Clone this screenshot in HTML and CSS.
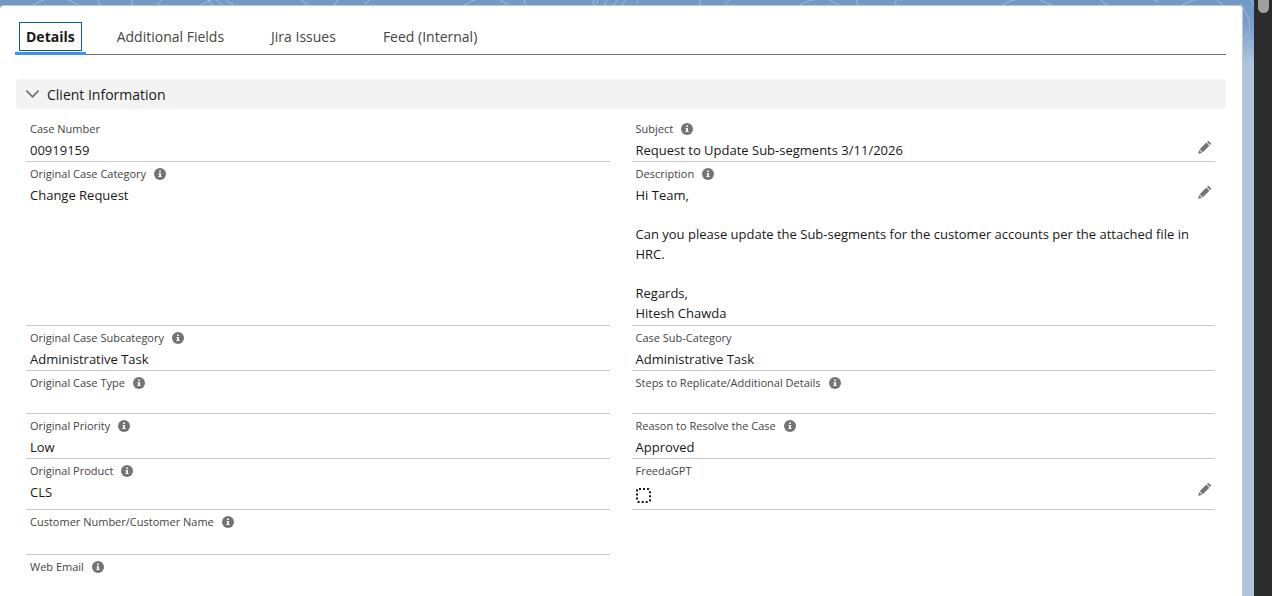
FILE: index.html
```
<!DOCTYPE html>
<html lang="en">
<head>
    <meta charset="UTF-8">
    <meta name="viewport" content="width=device-width, initial-scale=1.0">
    <title>Case 00919159 - Details</title>
    <link rel="stylesheet" href="styles.css">
</head>
<body>
    <!-- Shared icons -->
    <svg class="sprite" aria-hidden="true">
        <symbol id="icon-info" viewBox="0 0 12 12">
            <circle cx="6" cy="6" r="6" fill="#747474"/>
            <path d="M5.2 2.5h1.7v1.5H5.2zM4.6 5h2.3v3h.7v1H4.4V8h.8V6h-.6z" fill="#fff"/>
        </symbol>
        <symbol id="icon-edit" viewBox="0 0 13 13">
            <path d="M1.7 8.2L8.3 1.6l3.100 3.100-6.600 6.600z" fill="#747474"/>
            <path d="M9 1l.8-.8c.3-.3.8-.3 1.100 0l2 2c.3.3.3.8 0 1.100l-.8.8z" fill="#747474"/>
            <path d="M1.300 8.900l2.800 2.800-3.500 1.100c-.3.100-.500-.1-.4-.4z" fill="#747474"/>
        </symbol>
    </svg>

    <div class="page">
        <svg class="page-pattern" aria-hidden="true">
            <g fill="none" stroke="#9dbbdd" stroke-width="1">
                <path d="M32 6Q44-2 56-3M60-3Q72 0 80 6M98 0l3 6M132 0v6M157 6l5-7M199 6Q210-1 222-3M208 0l6 6M216 0l8 6M226 0l9 6"/>
                <path d="M298-2l12 8M334 6l4-7M364 6l6-7M463 6q8-5 14-7M498-1q8 4 12 7M524 0l2 6M595 0q-4 2-1 4t4-4M604 5l4-6M614 5l4-6M622 5l4-6M636 4l3-5"/>
                <path d="M700 0v6M725 5l5-6M798 6q10-6 22-8M826-2l14 8M856 0l2 6M894 5l3-6M1000 6q10-6 22-8M1040 0l14 6M1100 0l8 6M1154 0l5 2M1182 5q10-6 22-7M1214-2l8 6"/>
            </g>
            <svg x="100%" overflow="visible">
                <path d="M-14 3Q-4 18-4 26T-12 39M-12 52Q-5 50-1 48M-7 44l7-4M-3 0l3 6" fill="none" stroke="#9dbbdd" stroke-width="1"/>
            </svg>
        </svg>

        <main class="card">
            <nav class="tabs" role="tablist">
                <a href="#details" class="tab active" role="tab" aria-selected="true"><span>Details</span></a>
                <a href="#additional" class="tab" role="tab">Additional Fields</a>
                <a href="#jira" class="tab" role="tab">Jira Issues</a>
                <a href="#feed" class="tab" role="tab">Feed (Internal)</a>
            </nav>

            <section id="details">
                <h3 class="section-title">
                    <button type="button" class="section-toggle" aria-expanded="true">
                        <svg class="chevron" viewBox="0 0 14 8" aria-hidden="true"><path d="M1 1l6 6 6-6" fill="none" stroke="#747474" stroke-width="2" stroke-linecap="round"/></svg>
                        Client Information
                    </button>
                </h3>

                <div class="fields">
                    <div class="field">
                        <div class="field-content">
                            <div class="field-label">Case Number</div>
                            <div class="field-value">00919159</div>
                        </div>
                    </div>
                    <div class="field">
                        <div class="field-content">
                            <div class="field-label">Subject <button type="button" class="info-btn" aria-label="Help Subject"><svg><use href="#icon-info"/></svg></button></div>
                            <div class="field-value">Request to Update Sub-segments 3/11/2026</div>
                        </div>
                        <button type="button" class="edit-btn" aria-label="Edit Subject"><svg><use href="#icon-edit"/></svg></button>
                    </div>

                    <div class="field">
                        <div class="field-content">
                            <div class="field-label">Original Case Category <button type="button" class="info-btn" aria-label="Help Original Case Category"><svg><use href="#icon-info"/></svg></button></div>
                            <div class="field-value">Change Request</div>
                        </div>
                    </div>
                    <div class="field">
                        <div class="field-content">
                            <div class="field-label">Description <button type="button" class="info-btn" aria-label="Help Description"><svg><use href="#icon-info"/></svg></button></div>
                            <div class="field-value long-text">
                                <p>Hi Team,</p>
                                <p>Can you please update the Sub-segments for the customer accounts per the attached file in HRC.</p>
                                <p>Regards,<br>Hitesh Chawda</p>
                            </div>
                        </div>
                        <button type="button" class="edit-btn" aria-label="Edit Description"><svg><use href="#icon-edit"/></svg></button>
                    </div>

                    <div class="field">
                        <div class="field-content">
                            <div class="field-label">Original Case Subcategory <button type="button" class="info-btn" aria-label="Help Original Case Subcategory"><svg><use href="#icon-info"/></svg></button></div>
                            <div class="field-value">Administrative Task</div>
                        </div>
                    </div>
                    <div class="field">
                        <div class="field-content">
                            <div class="field-label">Case Sub-Category</div>
                            <div class="field-value">Administrative Task</div>
                        </div>
                    </div>

                    <div class="field empty">
                        <div class="field-content">
                            <div class="field-label">Original Case Type <button type="button" class="info-btn" aria-label="Help Original Case Type"><svg><use href="#icon-info"/></svg></button></div>
                        </div>
                    </div>
                    <div class="field empty">
                        <div class="field-content">
                            <div class="field-label">Steps to Replicate/Additional Details <button type="button" class="info-btn" aria-label="Help Steps to Replicate"><svg><use href="#icon-info"/></svg></button></div>
                        </div>
                    </div>

                    <div class="field">
                        <div class="field-content">
                            <div class="field-label">Original Priority <button type="button" class="info-btn" aria-label="Help Original Priority"><svg><use href="#icon-info"/></svg></button></div>
                            <div class="field-value">Low</div>
                        </div>
                    </div>
                    <div class="field">
                        <div class="field-content">
                            <div class="field-label">Reason to Resolve the Case <button type="button" class="info-btn" aria-label="Help Reason to Resolve the Case"><svg><use href="#icon-info"/></svg></button></div>
                            <div class="field-value">Approved</div>
                        </div>
                    </div>

                    <div class="field">
                        <div class="field-content">
                            <div class="field-label">Original Product <button type="button" class="info-btn" aria-label="Help Original Product"><svg><use href="#icon-info"/></svg></button></div>
                            <div class="field-value">CLS</div>
                        </div>
                    </div>
                    <div class="field">
                        <div class="field-content">
                            <label class="field-label" for="freeda">FreedaGPT</label>
                            <input type="checkbox" id="freeda" class="checkbox" disabled>
                        </div>
                        <button type="button" class="edit-btn" aria-label="Edit FreedaGPT"><svg><use href="#icon-edit"/></svg></button>
                    </div>

                    <div class="field left-only">
                        <div class="field-content">
                            <div class="field-label">Customer Number/Customer Name <button type="button" class="info-btn" aria-label="Help Customer Number"><svg><use href="#icon-info"/></svg></button></div>
                        </div>
                    </div>

                    <div class="field left-only">
                        <div class="field-content">
                            <div class="field-label">Web Email <button type="button" class="info-btn" aria-label="Help Web Email"><svg><use href="#icon-info"/></svg></button></div>
                        </div>
                    </div>
                </div>
            </section>
        </main>
    </div>

    <div class="scrollbar"><div class="scroll-thumb"></div></div>
</body>
</html>
```
FILE: styles.css
```
* {
    margin: 0;
    padding: 0;
    box-sizing: border-box;
}

body {
    display: flex;
    height: 100vh;
    overflow: hidden;
    font-family: 'Segoe UI', 'Open Sans', sans-serif;
    font-size: 13px;
    color: #181818;
}

button {
    border: none;
    background: none;
    font: inherit;
    color: inherit;
    cursor: pointer;
}

.sprite {
    position: absolute;
    width: 0;
    height: 0;
}

/* Page background */
.page {
    position: relative;
    flex: 1;
    min-width: 0;
    padding: 5px 11px 0 0;
    overflow: hidden;
    background: linear-gradient(#6f9ac8 0, #789fcd 25px, #b0c4df 64px);
}

.page-pattern {
    position: absolute;
    top: 0;
    left: 0;
    width: 100%;
    height: 64px;
}

.card {
    position: relative;
    min-height: 100%;
    padding: 13px 16px 16px;
    background-color: #fff;
    border: 1px solid #c3c6cb;
    border-left: none;
    border-radius: 4px 4px 0 0;
}

/* Tabs */
.tabs {
    display: flex;
    gap: 15px;
    height: 36px;
    border-bottom: 1px solid #747474;
}

.tab {
    display: flex;
    align-items: center;
    padding: 0 16px;
    font-size: 14px;
    line-height: 20px;
    color: #444;
    text-decoration: none;
}

.tab.active {
    align-items: flex-start;
    height: 36px;
    margin-left: -1px;
    padding: 3px 4px 0;
    border-bottom: 3px solid #3a91fb;
    font-weight: bold;
    color: #181818;
}

.tab.active span {
    padding: 4px 6px 3px;
    border: 1px solid #0b5cab;
}

/* Section header */
.section-title {
    margin-top: 24px;
    font-weight: normal;
}

.section-toggle {
    display: flex;
    align-items: center;
    gap: 8px;
    width: 100%;
    height: 30px;
    padding: 0 10px;
    background-color: #f3f3f3;
    border-radius: 4px;
    font-size: 14px;
}

.chevron {
    width: 13px;
    height: 8px;
}

/* Field grid */
.fields {
    display: grid;
    grid-template-columns: 1fr 1fr;
    column-gap: 22px;
    padding: 8px 11px 0 10px;
}

.field {
    display: flex;
    min-height: 45px;
    padding: 4px 0 1px 4px;
    border-bottom: 1px solid #c9c9c9;
}

.field.empty {
    min-height: 43px;
}

.field.left-only {
    grid-column: 1;
}

.field-content {
    flex: 1;
    min-width: 0;
}

.field-label {
    display: flex;
    align-items: center;
    gap: 8px;
    font-size: 11px;
    line-height: 16px;
    color: #444;
}

.field-value {
    margin-top: 3px;
    line-height: 20px;
}

.long-text {
    padding: 0 4px 1px 0;
}

.long-text p + p {
    margin-top: 19px;
}

.info-btn,
.info-btn svg {
    display: block;
    width: 12px;
    height: 12px;
}

.edit-btn {
    display: flex;
    align-items: center;
    justify-content: center;
    width: 22px;
    height: 20px;
    margin-top: 16px;
}

.edit-btn svg {
    width: 13px;
    height: 13px;
}

.checkbox {
    display: block;
    appearance: none;
    width: 15px;
    height: 15px;
    margin: 9px 0 5px;
    border: 2px dotted #181818;
    border-radius: 3px;
}

/* Scrollbar */
.scrollbar {
    width: 18px;
    background-color: #2b2b2b;
}

.scroll-thumb {
    width: 11px;
    height: 13px;
    margin-left: 4px;
    background-color: #9f9f9f;
    border-radius: 0 0 6px 6px;
}
```
